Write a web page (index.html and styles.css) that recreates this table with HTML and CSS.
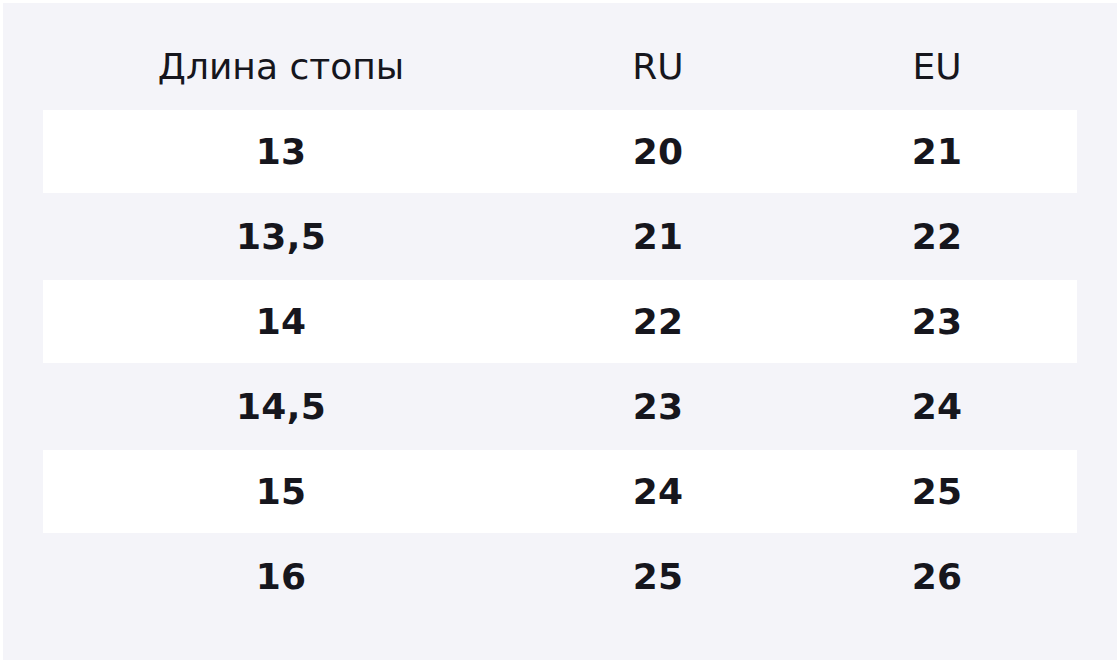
FILE: index.html
```html
<!DOCTYPE html>
<html lang="ru">
<head>
<meta charset="utf-8">
<title>Размеры</title>
<link rel="stylesheet" href="styles.css">
</head>
<body>
<div class="panel">
  <table class="sizes">
    <thead>
      <tr class="head"><th class="c1">Длина стопы</th><th class="c2">RU</th><th class="c3">EU</th></tr>
    </thead>
    <tbody>
      <tr class="odd"><td>13</td><td>20</td><td>21</td></tr>
      <tr class="even"><td>13,5</td><td>21</td><td>22</td></tr>
      <tr class="odd"><td>14</td><td>22</td><td>23</td></tr>
      <tr class="even"><td>14,5</td><td>23</td><td>24</td></tr>
      <tr class="odd"><td>15</td><td>24</td><td>25</td></tr>
      <tr class="even"><td>16</td><td>25</td><td>26</td></tr>
    </tbody>
  </table>
</div>
</body>
</html>
```
FILE: styles.css
```css
html, body { margin: 0; padding: 0; background: #ffffff; }
body { padding: 3px; }
.panel {
  width: 1114px;
  height: 657px;
  box-sizing: border-box;
  background: #f4f4f9;
  padding: 40px;
}
.sizes {
  width: 1034px;
  border-collapse: collapse;
  table-layout: fixed;
  font-family: "DejaVu Sans", sans-serif;
  color: #16161d;
  font-size: 36px;
}
.sizes th, .sizes td { padding: 0; text-align: center; vertical-align: middle; }
.c1 { width: 476px; }
.c2 { width: 278px; }
.c3 { width: 280px; }
.head th { font-weight: normal; height: 47px; padding-bottom: 20px; }
.sizes td { font-weight: bold; letter-spacing: 0.3px; }
.odd { background: #ffffff; }
.odd td { height: 83px; }
.even td { height: 87px; }
```
